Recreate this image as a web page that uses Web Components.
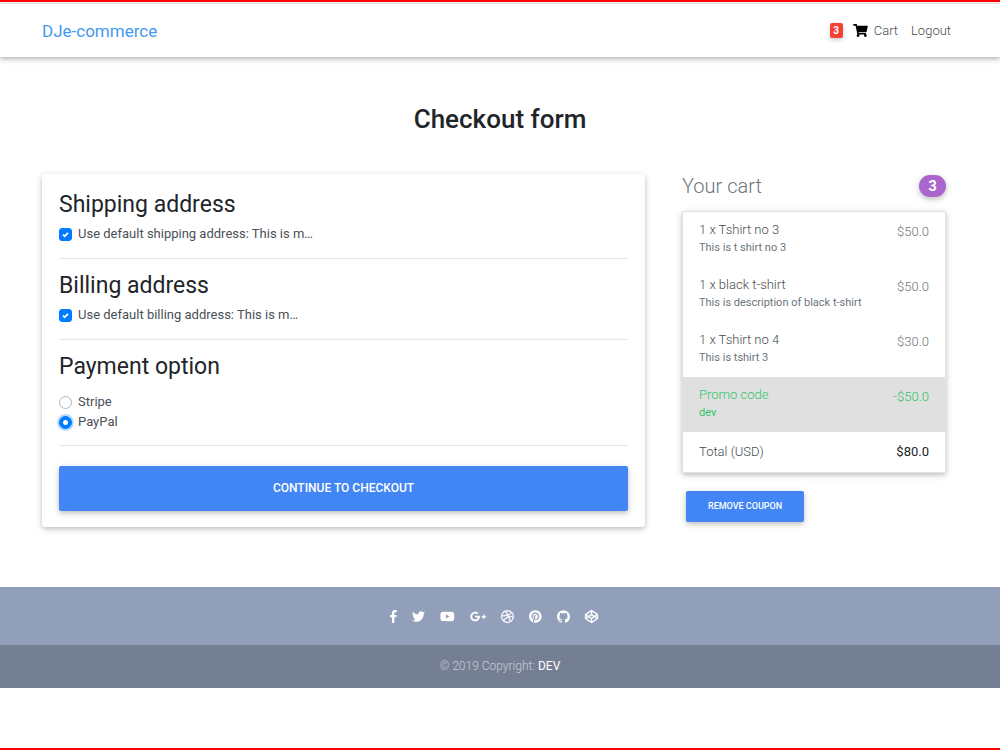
<!DOCTYPE html>
<html lang="en">
<head>
<meta charset="utf-8">
<meta name="viewport" content="width=device-width, initial-scale=1">
<title>Checkout form</title>
<style>
  * { box-sizing: border-box; }
  body {
    margin: 0;
    min-height: 100vh;
    border-top: 2px solid #f00;
    border-bottom: 2px solid #f00;
    background: #fff;
    color: #212529;
    font-family: Roboto, "Liberation Sans", sans-serif;
    font-size: 13px;
    font-weight: 300;
    line-height: 20px;
    --ink: #212529;
    --soft: #484c50;
    --muted: #6c757d;
    --primary: #4285f4;
    --rule: #e6e6e6;
    --lift: 0 2px 4px rgba(0,0,0,.16), 0 2px 8px rgba(0,0,0,.12);
  }
</style>
</head>
<body>
<shop-navbar brand="DJe-commerce" count="3"></shop-navbar>
<checkout-page heading="Checkout form">
  <checkout-form slot="form"></checkout-form>
  <cart-summary slot="cart" count="3">
    <cart-line name="1 x Tshirt no 3" note="This is t shirt no 3" price="$50.0"></cart-line>
    <cart-line name="1 x black t-shirt" note="This is description of black t-shirt" price="$50.0"></cart-line>
    <cart-line name="1 x Tshirt no 4" note="This is tshirt 3" price="$30.0"></cart-line>
    <cart-line kind="promo" name="Promo code" note="dev" price="-$50.0"></cart-line>
    <cart-line kind="total" name="Total (USD)" price="$80.0"></cart-line>
  </cart-summary>
</checkout-page>
<shop-footer></shop-footer>

<script>
const ICONS = {
  cart: ['0 0 576 512', 'M528.12 301.319l47.273-208C578.806 78.301 567.391 64 551.99 64H159.208l-9.166-44.81C147.758 8.021 137.93 0 126.529 0H24C10.745 0 0 10.745 0 24v16c0 13.255 10.745 24 24 24h69.883l70.248 343.435C147.325 417.1 136 435.222 136 456c0 30.928 25.072 56 56 56s56-25.072 56-56c0-15.674-6.447-29.835-16.824-40h209.647C430.447 426.165 424 440.326 424 456c0 30.928 25.072 56 56 56s56-25.072 56-56c0-22.172-12.888-41.332-31.579-50.405l5.517-24.276c3.413-15.018-8.002-29.319-23.403-29.319H218.117l-6.545-32h293.145c11.206 0 20.92-7.754 23.403-18.681z'],
  facebook: ['0 0 264 512', 'M215.8 85H264V3.600C255.700 2.500 227.100 0 193.800 0 124.300 0 76.700 42.400 76.700 120.300V192H0v91h76.700v229h94V283h73.600l11.700-91h-85.300v-62.700c0-26.300 7.300-44.300 45.100-44.300z'],
  twitter: ['0 0 512 512', 'M459.370 151.716c.325 4.548.325 9.097.325 13.645 0 138.720-105.583 298.558-298.558 298.558-59.452 0-114.680-17.219-161.137-47.106 8.447.974 16.568 1.299 25.340 1.299 49.055 0 94.213-16.568 130.274-44.832-46.132-.975-84.792-31.188-98.112-72.772 6.498.974 12.995 1.624 19.818 1.624 9.421 0 18.843-1.300 27.614-3.573-48.081-9.747-84.143-51.980-84.143-102.985v-1.299c13.969 7.797 30.214 12.670 47.431 13.319-28.264-18.843-46.781-51.005-46.781-87.391 0-19.492 5.197-37.360 14.294-52.954 51.655 63.675 129.300 105.258 216.365 109.807-1.624-7.797-2.599-15.918-2.599-24.040 0-57.828 46.782-104.934 104.934-104.934 30.213 0 57.502 12.670 76.670 33.137 23.715-4.548 46.456-13.320 66.599-25.340-7.798 24.366-24.366 44.833-46.132 57.827 21.117-2.273 41.584-8.122 60.426-16.243-14.292 20.791-32.161 39.308-52.628 54.253z'],
  youtube: ['0 0 576 512', 'M549.655 124.083c-6.281-23.650-24.787-42.276-48.284-48.597C458.781 64 288 64 288 64S117.220 64 74.629 75.486c-23.497 6.322-42.003 24.947-48.284 48.597-11.412 42.867-11.412 132.305-11.412 132.305s0 89.438 11.412 132.305c6.281 23.650 24.787 41.500 48.284 47.821C117.220 448 288 448 288 448s170.780 0 213.371-11.486c23.497-6.321 42.003-24.171 48.284-47.821 11.412-42.867 11.412-132.305 11.412-132.305s0-89.438-11.412-132.305zm-317.510 213.508V175.185l142.739 81.205-142.739 81.201z'],
  google: ['0 0 640 512', 'M386.061 228.496c1.834 9.692 3.143 19.384 3.143 31.956C389.204 370.205 315.599 448 204.800 448c-106.084 0-192-85.915-192-192s85.916-192 192-192c51.864 0 95.083 18.859 128.611 50.292l-52.126 50.030c-14.145-13.621-39.028-29.599-76.485-29.599-65.484 0-118.920 54.221-118.920 121.277 0 67.056 53.436 121.277 118.920 121.277 75.961 0 104.513-54.745 108.965-82.773H204.800v-66.009h181.261zm185.406 6.437V179.200h-56.001v55.733h-55.733v56.001h55.733v55.733h56.001v-55.733H627.200v-56.001h-55.733z'],
  dribbble: ['0 0 512 512', 'M256 8C119.252 8 8 119.252 8 256s111.252 248 248 248 248-111.252 248-248S392.748 8 256 8zm163.970 114.366c29.503 36.046 47.369 81.957 47.835 131.955-6.984-1.477-77.018-15.682-147.502-6.818-5.752-14.041-11.181-26.393-18.617-41.614 78.321-31.977 113.818-77.482 118.284-83.523zM396.421 97.870c-3.810 5.427-35.697 48.286-111.021 76.519-34.712-63.776-73.185-116.168-79.040-124.008 67.176-16.193 137.966 1.270 190.061 47.489zm-230.480-33.250c5.585 7.659 43.438 60.116 78.537 122.509-99.087 26.313-186.360 25.934-195.834 25.809C62.380 147.205 106.678 92.573 165.941 64.620zM44.170 256.323c0-2.166.043-4.322.108-6.473 9.268.19 111.920 1.513 217.706-30.146 6.064 11.868 11.857 23.915 17.174 35.949-76.599 21.575-146.194 83.527-180.531 142.306C64.794 360.405 44.170 310.730 44.170 256.323zm81.807 167.113c22.127-45.233 82.178-103.622 167.579-132.756 29.740 77.283 42.039 142.053 45.189 160.638-68.112 29.013-150.015 21.053-212.768-27.882zm248.380 8.489c-2.171-12.886-13.446-74.897-41.152-151.033 66.380-10.626 124.700 6.768 131.947 9.055-9.442 58.941-43.273 109.844-90.795 141.978z'],
  pinterest: ['0 0 496 512', 'M496 256c0 137-111 248-248 248-25.600 0-50.200-3.900-73.400-11.100 10.100-16.500 25.200-43.500 30.800-65 3-11.600 15.400-59 15.400-59 8.100 15.400 31.700 28.500 56.800 28.500 74.800 0 128.700-68.800 128.700-154.300 0-81.900-66.900-143.200-152.900-143.200-107 0-163.900 71.800-163.900 150.100 0 36.400 19.400 81.700 50.300 96.100 4.700 2.200 7.200 1.200 8.300-3.300.8-3.400 5-20.300 6.900-28.100.6-2.500.3-4.700-1.700-7.100-10.100-12.500-18.300-35.300-18.300-56.600 0-54.700 41.400-107.600 112-107.600 60.900 0 103.600 41.500 103.600 100.900 0 67.100-33.900 113.600-78 113.600-24.300 0-42.600-20.100-36.700-44.800 7-29.500 20.500-61.300 20.500-82.600 0-19-10.200-34.900-31.400-34.900-24.900 0-44.900 25.700-44.900 60.200 0 22 7.400 36.800 7.400 36.800s-24.500 103.800-29 123.200c-5 21.400-3 51.600-.9 71.200C65.400 450.900 0 361.100 0 256 0 119 111 8 248 8s248 111 248 248z'],
  github: ['0 0 24 24', 'M12 .5C5.400.5 0 5.800 0 12.400c0 5.200 3.400 9.700 8.200 11.300.6.1.8-.3.8-.6v-2.300c-3.300.7-4-1.400-4-1.400-.6-1.400-1.400-1.800-1.400-1.800-1-.7.1-.7.1-.7 1.200.1 1.900 1.200 1.900 1.200 1 1.800 2.800 1.300 3.500 1 .1-.8.4-1.300.8-1.600-2.700-.3-5.500-1.300-5.500-5.900 0-1.300.5-2.400 1.200-3.200-.1-.3-.5-1.500.1-3.200 0 0 1-.3 3.300 1.200a11.500 11.500 0 0 1 6 0c2.300-1.500 3.300-1.200 3.300-1.200.7 1.700.3 2.900.1 3.200.8.8 1.200 1.900 1.200 3.200 0 4.600-2.800 5.600-5.500 5.900.5.4.9 1.100.9 2.200v3.400c0 .3.2.7.8.6 4.800-1.600 8.200-6.100 8.200-11.300C24 5.800 18.600.5 12 .5z'],
  codepen: ['0 0 512 512', 'M502.285 159.704l-234-156c-7.987-4.915-16.511-4.960-24.571 0l-234 156C3.714 163.703 0 170.847 0 177.989v155.999c0 7.143 3.714 14.286 9.715 18.286l234 156.022c7.987 4.915 16.511 4.960 24.571 0l234-156.022c6-3.999 9.715-11.143 9.715-18.286V177.989c-.001-7.142-3.715-14.286-9.716-18.285zM278 63.131l172.286 114.858-76.857 51.429L278 165.703V63.131zm-44 0v102.572l-95.429 63.715-76.857-51.429L234 63.131zM44 219.132l55.143 36.857L44 292.847v-73.715zm190 229.715L61.714 333.989l76.857-51.429L234 346.275v102.572zm22-140.858l-77.715-52 77.715-52 77.715 52-77.715 52zm22 140.858V346.275l95.429-63.715 76.857 51.429L278 448.847zm190-156l-55.143-36.857L468 219.132v73.715z']
};

const icon = name => `<svg class="${name}" viewBox="${ICONS[name][0]}" aria-hidden="true"><path d="${ICONS[name][1]}"/></svg>`;

class Base extends HTMLElement {
  connectedCallback() {
    if (this.shadowRoot) return;
    this.attachShadow({ mode: 'open' }).innerHTML =
      `<style>*{box-sizing:border-box}${this.styles()}</style>${this.markup()}`;
  }
  attr(name) { return this.getAttribute(name) || ''; }
}

customElements.define('shop-navbar', class extends Base {
  styles() { return `
    :host { display: block; padding-top: 1px; }
    header { display: flex; align-items: center; justify-content: space-between;
      height: 54px; padding: 0 49px 0 42px; background: #fff; border-top: 1px solid #ddd;
      box-shadow: 0 2px 4px rgba(0,0,0,.2), 0 2px 8px rgba(0,0,0,.12); }
    a { color: var(--soft); text-decoration: none; }
    .brand { color: #4299ef; font-size: 17px; font-weight: 400; }
    nav { display: flex; align-items: center; gap: 13px; }
    .cart { display: flex; align-items: center; }
    .badge { width: 13px; height: 15px; margin-right: 10px; border-radius: 2px; background: #f44336;
      color: #fff; font-size: 10px; font-weight: 700; line-height: 15px; text-align: center;
      box-shadow: 0 2px 4px rgba(0,0,0,.2); }
    svg { width: 15px; height: 13px; margin-right: 6px; fill: #000; }`; }
  markup() { return `<header>
    <a class="brand" href="#">${this.attr('brand')}</a>
    <nav><a class="cart" href="#"><span class="badge">${this.attr('count')}</span>${icon('cart')}<span>Cart</span></a>
    <a href="#">Logout</a></nav></header>`; }
});

customElements.define('checkout-page', class extends Base {
  styles() { return `
    :host { display: block; padding: 46px 54px 60px 42px; }
    h2 { margin: 0 -12px 39px 0; font-size: 26px; font-weight: 500; line-height: 32px; text-align: center; }
    .cols { display: grid; grid-template-columns: minmax(0, 603fr) minmax(0, 264fr); gap: 37px; align-items: start; }
    @media (max-width: 640px) { .cols { grid-template-columns: minmax(0, 1fr); } }`; }
  markup() { return `<main><h2>${this.attr('heading')}</h2>
    <div class="cols"><slot name="form"></slot><slot name="cart"></slot></div></main>`; }
});

customElements.define('ui-button', class extends Base {
  styles() { return `
    :host { display: block; }
    button { display: block; width: 100%; border: 0; border-radius: 2px; padding: 0 22px; height: 31px;
      background: var(--primary); color: #fff; font: 500 9px/31px Roboto, "Liberation Sans", sans-serif;
      text-transform: uppercase; white-space: nowrap; box-shadow: var(--lift); cursor: pointer; }
    :host([large]) button { height: 45px; font-size: 12px; line-height: 45px; }`; }
  markup() { return `<button type="button"><slot></slot></button>`; }
});

customElements.define('choice-field', class extends Base {
  styles() { return `
    :host { display: block; }
    label { display: flex; align-items: center; gap: 6px; font-weight: 400; color: #495057; }
    input { appearance: none; flex: none; width: 13px; height: 13px; margin: 0; border: 1px solid #adb5bd;
      background: #fff center / 100% no-repeat; border-radius: 50%; }
    input[type=checkbox] { border-radius: 3px; }
    input:checked { border-color: #007bff; background-color: #007bff; }
    input[type=checkbox]:checked { background-image: url("data:image/svg+xml,%3Csvg xmlns='http://www.w3.org/2000/svg' viewBox='0 0 13 13'%3E%3Cpath d='M3.500 6.500l2 2 4-4' fill='none' stroke='white' stroke-width='2'/%3E%3C/svg%3E"); }
    input[type=radio]:checked { background-image: radial-gradient(circle, #fff 2px, transparent 3px); }
    :host([active]) input { box-shadow: 0 0 0 2px #b8dbff; }`; }
  markup() { const t = this.attr('type'); return `<label><input type="${t}" name="${this.attr('name')}"
    ${this.hasAttribute('checked') ? 'checked' : ''}><span><slot></slot></span></label>`; }
});

customElements.define('checkout-form', class extends Base {
  styles() { return `
    :host { display: block; }
    form { padding: 15px 17px 16px; border-radius: 3px; background: #fff; box-shadow: var(--lift); }
    h3 { margin: 0 0 3px; font-size: 23px; font-weight: 400; line-height: 32px; }
    fieldset { margin: 0; padding: 0; border: 0; }
    hr { height: 1px; margin: 14px 0 11px; border: 0; background: var(--rule); }
    .options { margin-top: 9px; }
    hr.last { margin: 13px 0 20px; }`; }
  markup() { return `<form>
    <h3>Shipping address</h3>
    <choice-field type="checkbox" name="shipping" checked>Use default shipping address: This is m…</choice-field>
    <hr>
    <h3>Billing address</h3>
    <choice-field type="checkbox" name="billing" checked>Use default billing address: This is m…</choice-field>
    <hr>
    <h3>Payment option</h3>
    <fieldset class="options" aria-label="Payment option">
      <choice-field type="radio" name="payment">Stripe</choice-field>
      <choice-field type="radio" name="payment" checked active>PayPal</choice-field>
    </fieldset>
    <hr class="last">
    <ui-button large>Continue to checkout</ui-button>
  </form>`; }
});

customElements.define('cart-summary', class extends Base {
  styles() { return `
    :host { display: block; }
    h4 { display: flex; align-items: center; justify-content: space-between; height: 24px; margin: 0 0 13px;
      color: var(--muted); font-size: 20px; font-weight: 300; line-height: 24px; }
    .pill { width: 27px; height: 22px; border-radius: 11px; background: #a6c; color: #fff;
      font-size: 15px; font-weight: 700; line-height: 22px; text-align: center; box-shadow: var(--lift); }
    .list { border: 1px solid #e2e2e2; border-radius: 2px; box-shadow: var(--lift); }
    .actions { display: flex; padding: 18px 4px 0; }`; }
  markup() { return `<section>
    <h4><span>Your cart</span><span class="pill">${this.attr('count')}</span></h4>
    <div class="list"><slot></slot></div>
    <div class="actions"><ui-button>Remove coupon</ui-button></div></section>`; }
});

customElements.define('cart-line', class extends Base {
  styles() { return `
    :host { display: flex; justify-content: space-between; gap: 8px; padding: 9px 16px 10px; }
    .name { color: var(--soft); line-height: 18px; }
    small { display: block; color: var(--muted); font-size: 11px; font-weight: 400; line-height: 18px; }
    .price { color: var(--muted); line-height: 22px; }
    :host([kind=promo]) { background: #e0e0e0; }
    :host([kind=promo]) :is(.name, small, .price) { color: #2fc46a; }
    :host([kind=total]) { padding: 9px 16px; }
    :host([kind=total]) .name { line-height: 22px; }
    :host([kind=total]) .price { color: var(--ink); font-weight: 400; }`; }
  markup() { const n = this.attr('note'); return `<div><div class="name">${this.attr('name')}</div>
    ${n ? `<small>${n}</small>` : ''}</div><span class="price">${this.attr('price')}</span>`; }
});

customElements.define('shop-footer', class extends Base {
  styles() { return `
    :host { display: block; background: #929fba; color: #fff; }
    nav { display: flex; justify-content: center; align-items: center; gap: 15px; height: 58px; padding-right: 12px; }
    a { display: block; color: #fff; font-weight: 400; text-decoration: none; }
    svg { display: block; height: 13px; fill: #fff; }
    .dribbble, .codepen { stroke: #fff; stroke-width: 12px; overflow: visible; }
    p { display: flex; justify-content: center; gap: 3px; margin: 0; height: 43px; background: rgba(0,0,0,.2);
      color: rgba(255,255,255,.6); font-size: 12px; line-height: 43px; }`; }
  markup() {
    const names = ['facebook', 'twitter', 'youtube', 'google', 'dribbble', 'pinterest', 'github', 'codepen'];
    return `<footer><nav>${names.map(n => `<a href="#" aria-label="${n}">${icon(n)}</a>`).join('')}</nav>
    <p><span>© 2019 Copyright:</span><a href="#">DEV</a></p></footer>`; }
});
</script>
</body>
</html>
